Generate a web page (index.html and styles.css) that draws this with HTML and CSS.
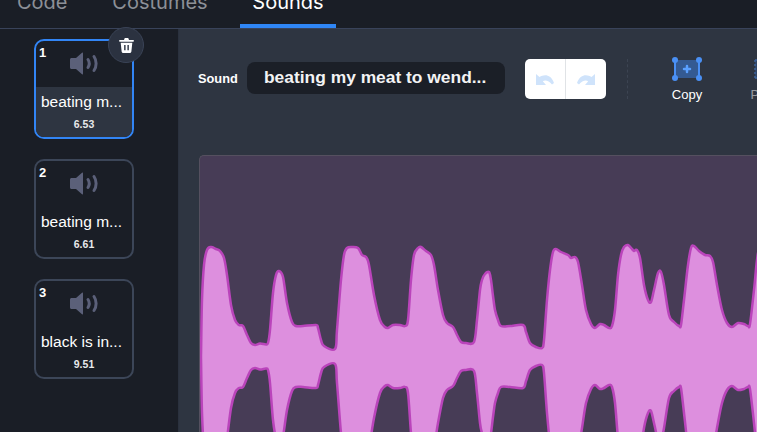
FILE: index.html
```html
<!DOCTYPE html>
<html>
    <head>
        <meta charset="utf-8">
        <title>Sounds</title>
        <link rel="stylesheet" href="styles.css">
    </head>
    <body>
        <div class="tabs">
            <div class="tab tab-code">Code</div>
            <div class="tab tab-costumes">Costumes</div>
            <div class="tab tab-sounds">Sounds</div>
        </div>

        <div class="main">
            <div class="sidebar">
                <div class="card card-selected">
                    <div class="card-index">1</div>
                    <div class="card-art">
                        <svg class="speaker" viewBox="0 0 28 23"><path d="M1.5 6h4.5L12 .8c.6-.5 1-.3 1 .4v20.6c0 .7-.4.9-1 .4L6 17H1.5C.7 17 0 16.300 0 15.500v-8C0 6.700.7 6 1.500 6z"/><path class="wave" d="M18 7.500c1.500 2.400 1.500 5.600 0 8"/><path class="wave" d="M24 4.500c2.800 4 2.800 10 0 14"/></svg>
                    </div>
                    <div class="card-info">
                        <div class="card-name">beating m...</div>
                        <div class="card-time">6.53</div>
                    </div>
                    <div class="delete">
                        <svg viewBox="0 0 16 16"><path d="M5.500 2V1.500C5.500.7 6.200 0 7 0h2c.8 0 1.500.7 1.500 1.500V2H15c.6 0 1 .4 1 1s-.4 1-1 1H1C.4 4 0 3.600 0 3s.4-1 1-1z"/><path fill-rule="evenodd" d="M1.800 5h12.400l-1 9.300c-.1.900-.8 1.700-1.800 1.700H4.600c-1 0-1.700-.8-1.800-1.700zM5.500 7.500v5.500h1.500V7.500zM9 7.500v5.500h1.500V7.500z"/></svg>
                    </div>
                </div>
                <div class="card">
                    <div class="card-index">2</div>
                    <div class="card-art">
                        <svg class="speaker" viewBox="0 0 28 23"><path d="M1.5 6h4.500L12 .8c.6-.5 1-.3 1 .4v20.600c0 .7-.4.9-1 .4L6 17H1.500C.7 17 0 16.300 0 15.500v-8C0 6.700.7 6 1.500 6z"/><path class="wave" d="M18 7.500c1.500 2.400 1.500 5.600 0 8"/><path class="wave" d="M24 4.500c2.800 4 2.800 10 0 14"/></svg>
                    </div>
                    <div class="card-info">
                        <div class="card-name">beating m...</div>
                        <div class="card-time">6.61</div>
                    </div>
                </div>
                <div class="card">
                    <div class="card-index">3</div>
                    <div class="card-art">
                        <svg class="speaker" viewBox="0 0 28 23"><path d="M1.5 6h4.500L12 .8c.6-.5 1-.3 1 .4v20.600c0 .7-.4.9-1 .4L6 17H1.500C.7 17 0 16.300 0 15.500v-8C0 6.700.7 6 1.500 6z"/><path class="wave" d="M18 7.500c1.500 2.400 1.500 5.600 0 8"/><path class="wave" d="M24 4.500c2.800 4 2.800 10 0 14"/></svg>
                    </div>
                    <div class="card-info">
                        <div class="card-name">black is in...</div>
                        <div class="card-time">9.51</div>
                    </div>
                </div>
            </div>

            <div class="editor">
                <div class="toolbar">
                    <div class="sound-label">Sound</div>
                    <div class="sound-name">beating my meat to wend...</div>
                    <div class="history">
                        <div class="history-btn">
                            <svg viewBox="0 0 18 11"><path d="M0 0l3.500 3C8 0 15 0 18 9l-2 1.500C13 6.500 9 5.500 6.800 7.200L10 11H0z"/></svg>
                        </div>
                        <div class="history-btn">
                            <svg class="flip" viewBox="0 0 18 11"><path d="M0 0l3.500 3C8 0 15 0 18 9l-2 1.500C13 6.500 9 5.500 6.800 7.200L10 11H0z"/></svg>
                        </div>
                    </div>
                    <div class="divider"></div>
                    <div class="tool">
                        <svg viewBox="0 0 30 25">
                            <rect class="sel-fill" x="3" y="3" width="24" height="18"/>
                            <path class="sel-edge" d="M3 3v18M27 3v18"/>
                            <circle class="sel-dot" cx="3" cy="3" r="3"/>
                            <circle class="sel-dot" cx="27" cy="3" r="3"/>
                            <circle class="sel-dot" cx="3" cy="21" r="3"/>
                            <circle class="sel-dot" cx="27" cy="21" r="3"/>
                            <path class="sel-plus" d="M15 9v6M12 12h6"/>
                        </svg>
                        <div class="tool-label">Copy</div>
                    </div>
                    <div class="tool tool-off">
                        <svg viewBox="0 0 30 25">
                            <rect class="sel-fill" x="3" y="3" width="24" height="18"/>
                            <path class="sel-dash" d="M3 3v18M27 3v18M3 3h24M3 21h24"/>
                            <path class="sel-plus" d="M15 9v6M12 12h6"/>
                        </svg>
                        <div class="tool-label">Paste</div>
                    </div>
                </div>
                <div class="waveform">
                    <svg viewBox="199 155 600 300"><path id="wave" class="wave-shape"/></svg>
                </div>
            </div>
        </div>

        <script src="waveform.js"></script>
    </body>
</html>
```

FILE: styles.css
```css
* {
    box-sizing: border-box;
}

html, body {
    margin: 0;
    width: 757px;
    height: 432px;
    overflow: hidden;
}

body {
    display: flex;
    flex-direction: column;
    background: #1a1e26;
    color: #fff;
    font-family: "Liberation Sans", Arial, sans-serif;
}

/* tabs, cut off by the top of the window */
.tabs {
    flex: 0 0 29px;
    display: flex;
    align-items: flex-end;
    overflow: hidden;
    border-bottom: 1px solid #39435a;
    font-family: Inter, "Liberation Sans", sans-serif;
    font-size: 20px;
}

.tab {
    height: 40px;
    padding-top: 2px;
    color: #8c9097;
    text-align: center;
}

.tab-code {
    width: 50px;
    margin-left: 17px;
}

.tab-costumes {
    width: 96px;
    margin-left: 45px;
}

.tab-sounds {
    width: 96px;
    margin-left: 32px;
    color: #fff;
    border-bottom: 4px solid #2f86f5;
}

.main {
    flex: 1;
    display: flex;
    min-height: 0;
}

.sidebar {
    flex: 0 0 179px;
    display: flex;
    flex-direction: column;
    gap: 20px;
    padding: 10px 0 0 34px;
    border-right: 1px solid #2a313e;
}

.card {
    position: relative;
    width: 100px;
    height: 100px;
    border: 2px solid #3c4658;
    border-radius: 10px;
}

.card-selected {
    border-color: #3285f5;
}

.card-index {
    position: absolute;
    top: 5px;
    left: 3px;
    font-size: 13px;
    font-weight: bold;
    line-height: 14px;
}

.card-art {
    height: 46px;
    padding-top: 11px;
    text-align: center;
}

.speaker {
    display: block;
    width: 28px;
    height: 23px;
    margin-left: 34px;
    fill: #5b6079;
}

.speaker .wave {
    fill: none;
    stroke: #5b6079;
    stroke-width: 3;
    stroke-linecap: round;
}

.card-info {
    height: 50px;
    padding-top: 6px;
    text-align: center;
    border-radius: 0 0 8px 8px;
}

.card-selected .card-info {
    background: #2e3541;
}

.card-name {
    padding-left: 5px;
    font-size: 15.500px;
    line-height: 18px;
    text-align: left;
    white-space: nowrap;
}

.card-time {
    margin-top: 6px;
    font-size: 10.500px;
    font-weight: bold;
    line-height: 14px;
    color: #e8e9eb;
}

.delete {
    position: absolute;
    top: -14px;
    right: -12px;
    width: 36px;
    height: 36px;
    display: flex;
    align-items: center;
    justify-content: center;
    background: #2b3240;
    border: 1px solid #3a4356;
    border-radius: 50%;
}

.delete svg {
    width: 15px;
    height: 15px;
    fill: #fff;
}

.editor {
    flex: 1;
    min-width: 0;
    overflow: hidden;
    padding: 30px 0 0 19px;
    background: #2e3541;
}

.toolbar {
    display: flex;
    align-items: center;
    height: 40px;
    width: 700px;
}

.sound-label {
    width: 39px;
    margin-right: 10px;
    font-size: 12.800px;
    font-weight: bold;
    margin-top: -2px;
    white-space: nowrap;
}

.sound-name {
    width: 258px;
    height: 32px;
    margin-top: -2px;
    margin-right: 20px;
    padding-left: 17px;
    background: #1b1f27;
    border-radius: 8px;
    font-size: 17.400px;
    font-weight: bold;
    line-height: 31px;
    color: #f3f3f4;
    white-space: nowrap;
}

.history {
    flex: 0 0 81px;
    height: 40px;
    display: flex;
    background: #fff;
    border-radius: 5px;
}

.history-btn {
    flex: 1;
    display: flex;
    align-items: center;
    justify-content: center;
}

.history-btn + .history-btn {
    border-left: 1px solid #e0e3e6;
}

.history-btn svg {
    width: 18px;
    height: 11px;
    fill: #cfe3fb;
}

.history-btn .flip {
    transform: scaleX(-1);
}

.divider {
    height: 40px;
    margin-left: 21px;
    margin-right: 29px;
    border-left: 1px dashed #3c4452;
}

.tool {
    flex: 0 0 60px;
    margin-right: 20px;
    margin-top: 2px;
    text-align: center;
}

.tool svg {
    display: block;
    width: 30px;
    height: 25px;
    margin: 0 auto 5px;
}

.tool-label {
    font-size: 13px;
    line-height: 16px;
}

.tool-off {
    opacity: 0.5;
}

.sel-fill {
    fill: #345a92;
}

.sel-edge {
    stroke: #4a90f5;
    stroke-width: 2;
    fill: none;
}

.sel-dash {
    stroke: #4a90f5;
    stroke-width: 1.500;
    stroke-dasharray: 2 2;
    fill: none;
}

.sel-dot {
    fill: #4a90f5;
}

.sel-plus {
    stroke: #5aa0ff;
    stroke-width: 2.500;
    stroke-linecap: round;
    fill: none;
}

.waveform {
    width: 600px;
    height: 300px;
    margin-top: 56px;
    margin-left: 1px;
    overflow: hidden;
    background: #473c56;
    border: 1px solid #55505f;
    border-bottom: 0;
    border-right: 0;
    border-radius: 5px 0 0 0;
}

.waveform svg {
    display: block;
    width: 600px;
    height: 300px;
    margin: -1px 0 0 -1px;
}

.wave-shape {
    fill: #dd8fde;
    stroke: #ba44bb;
    stroke-width: 2.500;
    stroke-linejoin: round;
}
```

FILE: waveform.js
```js
//Upper edge of the wave, the lower edge mirrors it around the middle line
var middle = 356.5;
var top_edge = [
    [201,356],[202,300],[204,265],[207,250],[211,247],[216,249],[220,251],[224,258],[227,275],[231,305],
    [235,320],[239,325],[243,326],[247,335],[251,343],[255,345],[260,343.5],[266,344.5],[268,343],[270,330],
    [273,293],[276,275],[279,271],[283,277],[287,303],[292,322],[296,326],[303,326],[316,325],
    [318,328],[321,340],[324,346],[335,349],[337,330],[341,280],[344,255],[347,248],[352,247],[358,248],
    [362,255],[366,257],[369,265],[374,295],[380,320],[385,327],[388,328],[393,325],[400,325],[405,326],
    [408,320],[411,280],[414,255],[418,248],[421,247],[426,251],[431,255],[434,265],[438,290],[443,315],
    [447,323],[453,327],[457,335],[461,342],[466,343],[474,342],[477,320],[480,290],[482,280],[485,274],[489,272],
    [491,280],[493,296],[495,310],[498,320],[501,326],[510,326],[523,325],[526,332],[530,343],[536,347],[542,348],
    [544,340],[547,300],[550,270],[553,252],[556,249],[561,252],[568,255],[571,258],[575,257],[578,262],
    [582,285],[586,310],[591,324],[595,328],[600,324],[604,325],[609,328],[612,326],[615,310],[618,275],
    [621,255],[624,247],[628,245],[632,249],[634,251],[637,250],[640,258],[644,285],[648,300],[651,302],
    [654,290],[658,273],[661,272],[664,285],[669,315],[674,322],[679,326],[681,325],[684,300],[688,265],
    [691,248],[694,246],[699,251],[705,255],[710,256],[713,262],[717,285],[722,310],[727,323],[732,327],
    [738,323],[744,324],[748,326],[750,324],[754,290],[757,260],[760,248],[770,248]
];

function smoothLine(points)
{
    var d = "";
    for (let i = 0; i < points.length - 1; i++)
    {
        var p0 = points[Math.max(i - 1, 0)];
        var p1 = points[i];
        var p2 = points[i + 1];
        var p3 = points[Math.min(i + 2, points.length - 1)];
        d += " C" + (p1[0] + (p2[0] - p0[0]) / 6).toFixed(1) + " " + (p1[1] + (p2[1] - p0[1]) / 6).toFixed(1)
            + " " + (p2[0] - (p3[0] - p1[0]) / 6).toFixed(1) + " " + (p2[1] - (p3[1] - p1[1]) / 6).toFixed(1)
            + " " + p2[0] + " " + p2[1];
    }
    return d;
}

var bottom_edge = top_edge.map(function (p) { return [p[0], middle * 2 - p[1]]; }).reverse();
var last = bottom_edge[0];

document.getElementById("wave").setAttribute("d",
    "M" + top_edge[0][0] + " " + top_edge[0][1] + smoothLine(top_edge)
    + " L" + last[0] + " " + last[1] + smoothLine(bottom_edge) + " Z");
```
